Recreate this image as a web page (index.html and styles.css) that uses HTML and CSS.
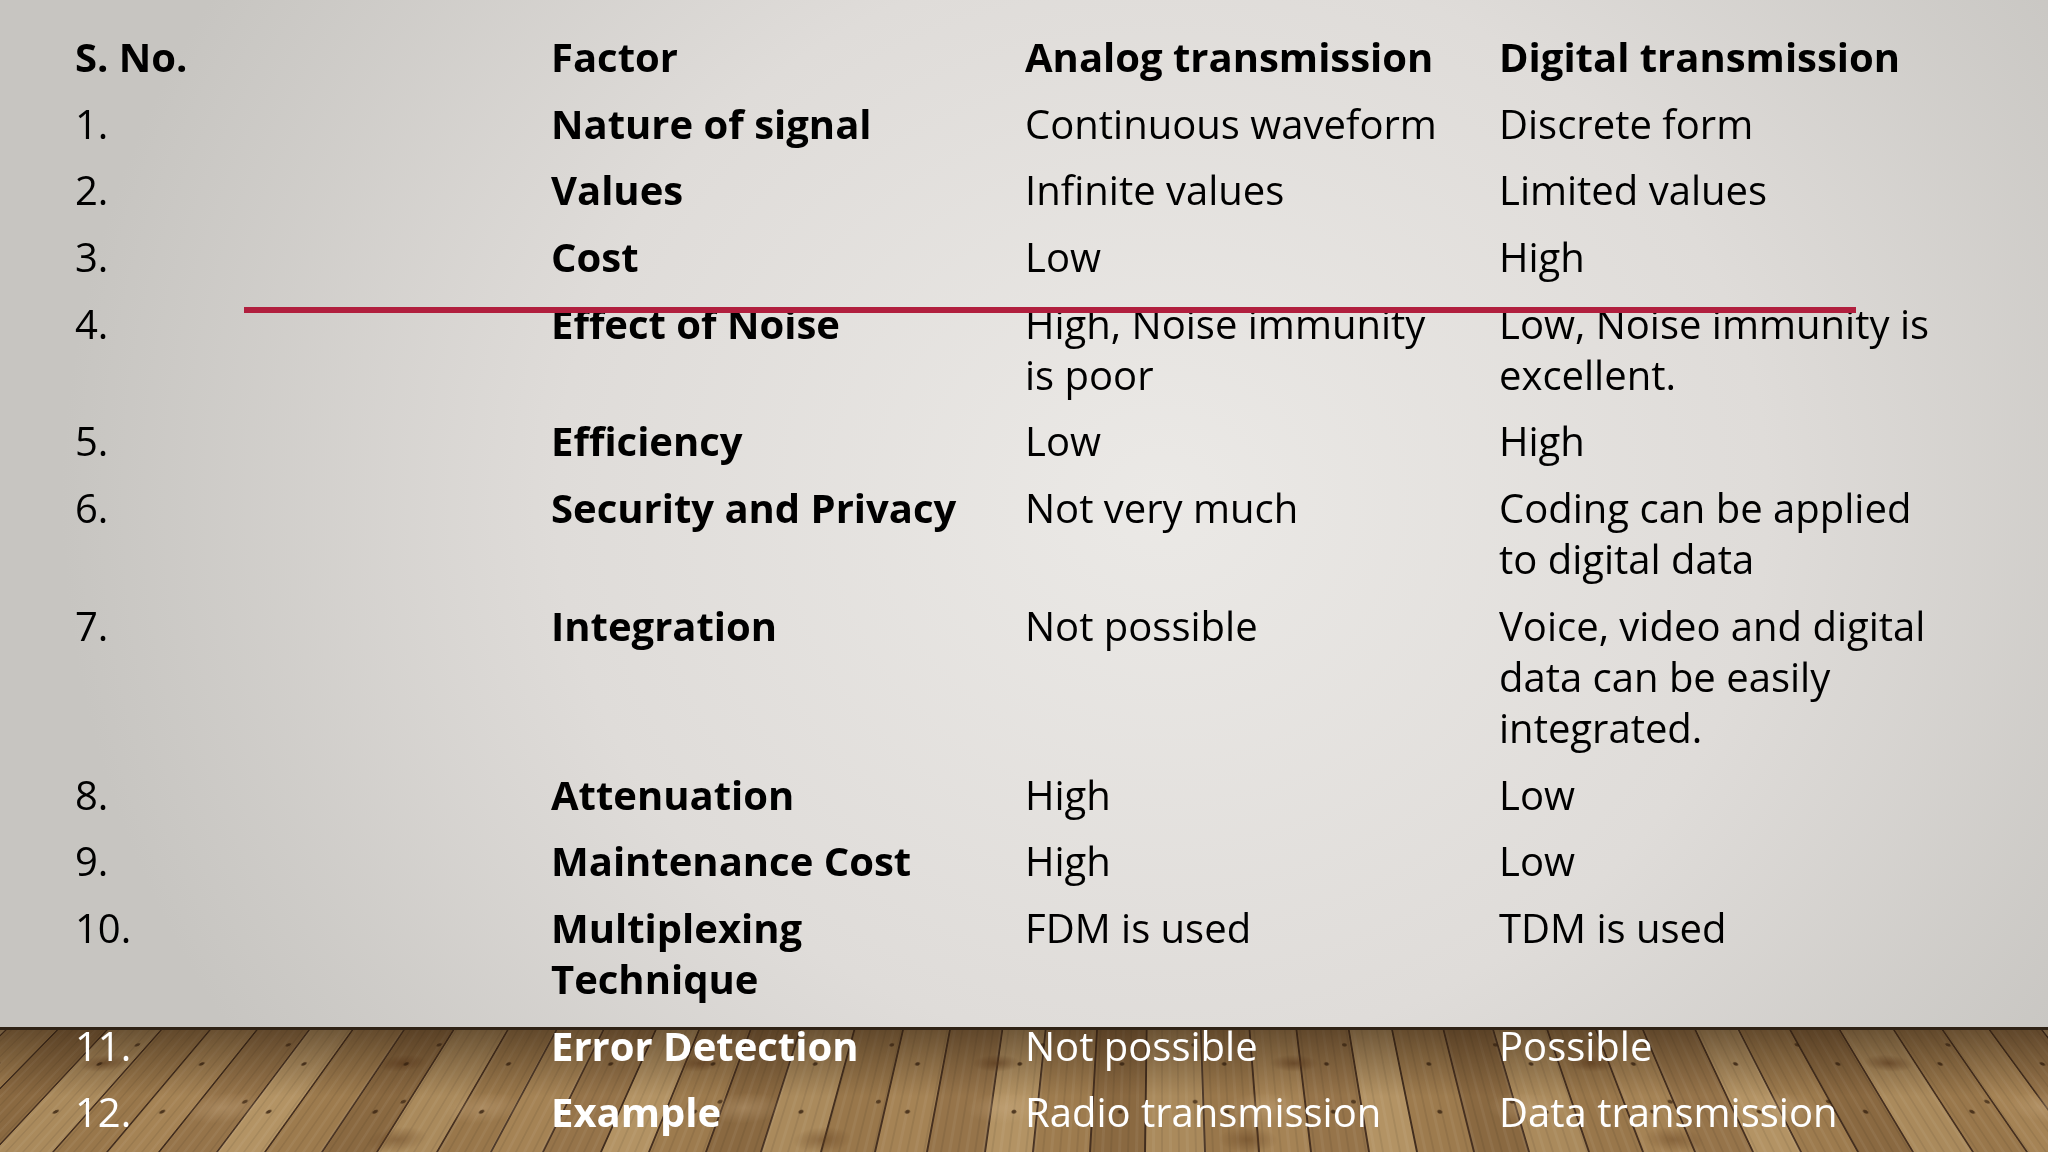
FILE: index.html
```html
<!DOCTYPE html>
<html lang="en">
<head>
<meta charset="utf-8">
<title>Analog vs Digital transmission</title>
<link rel="stylesheet" href="styles.css">
</head>
<body>
<div class="slide">
  <div class="backdrop">
    <div class="wall"></div>
    <div class="floor"><div class="planks"></div></div>
  </div>
  <div class="content">
    <div class="table">
      <div class="cell b">S. No.</div>
      <div class="cell b">Factor</div>
      <div class="cell b">Analog transmission</div>
      <div class="cell b">Digital transmission</div>

      <div class="cell">1.</div>
      <div class="cell b">Nature of signal</div>
      <div class="cell">Continuous waveform</div>
      <div class="cell">Discrete form</div>

      <div class="cell">2.</div>
      <div class="cell b">Values</div>
      <div class="cell">Infinite values</div>
      <div class="cell">Limited values</div>

      <div class="cell">3.</div>
      <div class="cell b">Cost</div>
      <div class="cell">Low</div>
      <div class="cell">High</div>

      <div class="cell">4.</div>
      <div class="cell b">Effect of Noise</div>
      <div class="cell">High, Noise immunity is poor</div>
      <div class="cell">Low, Noise immunity is excellent.</div>

      <div class="cell">5.</div>
      <div class="cell b">Efficiency</div>
      <div class="cell">Low</div>
      <div class="cell">High</div>

      <div class="cell">6.</div>
      <div class="cell b">Security and Privacy</div>
      <div class="cell">Not very much</div>
      <div class="cell">Coding can be applied to digital data</div>

      <div class="cell">7.</div>
      <div class="cell b">Integration</div>
      <div class="cell">Not possible</div>
      <div class="cell">Voice, video and digital data can be easily integrated.</div>

      <div class="cell">8.</div>
      <div class="cell b">Attenuation</div>
      <div class="cell">High</div>
      <div class="cell">Low</div>

      <div class="cell">9.</div>
      <div class="cell b">Maintenance Cost</div>
      <div class="cell">High</div>
      <div class="cell">Low</div>

      <div class="cell">10.</div>
      <div class="cell b">Multiplexing Technique</div>
      <div class="cell">FDM is used</div>
      <div class="cell">TDM is used</div>

      <div class="cell light">11.</div>
      <div class="cell b light">Error Detection</div>
      <div class="cell light">Not possible</div>
      <div class="cell light">Possible</div>

      <div class="cell light">12.</div>
      <div class="cell b light">Example</div>
      <div class="cell light">Radio transmission</div>
      <div class="cell light">Data transmission</div>
    </div>
    <div class="strike"></div>
  </div>
</div>
</body>
</html>
```
FILE: styles.css
```css
html, body {
  margin: 0;
  padding: 0;
}

body {
  width: 2048px;
  height: 1152px;
  overflow: hidden;
  font-family: "Open Sans", "Noto Sans", sans-serif;
}

.slide {
  display: grid;
  width: 2048px;
  height: 1152px;
  overflow: hidden;
}

.backdrop,
.content {
  grid-area: 1 / 1;
}

.backdrop {
  display: flex;
  flex-direction: column;
}

.wall {
  flex: 1;
  background: radial-gradient(ellipse 1100px 1000px at 50% 500px, #ebe9e6 0%, #dfdcd9 55%, #c7c5c1 100%);
}

.floor {
  height: 125px;
  box-sizing: border-box;
  border-top: 3px solid #2f2215;
  overflow: hidden;
  perspective: 1000px;
  perspective-origin: 50% 0;
  background: #94724a;
}

.planks {
  width: 2600px;
  height: 220px;
  margin-left: -276px;
  margin-top: -98px;
  transform-origin: 50% 100%;
  transform: rotateX(41.6deg);
  background:
    linear-gradient(to top, rgba(0, 0, 0, 0) 0 70px, rgba(40, 24, 10, 0.5) 166px),
    radial-gradient(circle, rgba(55, 34, 16, 0.8) 0 2px, rgba(55, 34, 16, 0) 3px) 20px 10px / 110px 64px,
    radial-gradient(circle, rgba(55, 34, 16, 0.7) 0 2px, rgba(55, 34, 16, 0) 3px) 70px 40px / 165px 78px,
    radial-gradient(ellipse 26px 12px, rgba(100, 62, 30, 0.6), rgba(100, 62, 30, 0)) 140px 40px / 320px 130px,
    radial-gradient(ellipse 30px 16px, rgba(95, 60, 28, 0.45), rgba(95, 60, 28, 0)) 20px 120px / 430px 170px,
    radial-gradient(ellipse 40px 20px, rgba(205, 175, 135, 0.35), rgba(205, 175, 135, 0)) 60px 90px / 270px 150px,
    repeating-linear-gradient(90deg, rgba(255, 255, 255, 0.05) 0 3px, rgba(0, 0, 0, 0) 3px 9px, rgba(0, 0, 0, 0.07) 9px 11px, rgba(0, 0, 0, 0) 11px 17px),
    repeating-linear-gradient(90deg,
      #a58355 0 50px, #463020 50px 52px,
      #96744a 52px 108px, #463020 108px 110px,
      #b39364 110px 156px, #463020 156px 158px,
      #9d7b4e 158px 213px, #463020 213px 215px,
      #8a6941 215px 268px, #463020 268px 270px,
      #aa8a5c 270px 328px, #463020 328px 330px,
      #99774b 330px 382px, #463020 382px 384px);
}

.content {
  position: relative;
  padding: 31px 0 0 75px;
}

.table {
  display: grid;
  grid-template-columns: 476px 474px 474px 485px;
  row-gap: 15.7px;
  font-size: 40px;
  line-height: 51px;
  color: #000;
}

.cell {
  padding-right: 40px;
}

.b {
  font-weight: 700;
}

.light {
  color: #fff;
}

.strike {
  position: absolute;
  left: 244px;
  top: 307px;
  width: 1612px;
  height: 6px;
  background: #b11f3e;
}
```
